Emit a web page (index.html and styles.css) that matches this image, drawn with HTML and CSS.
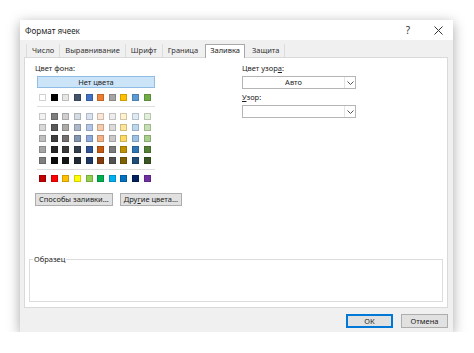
FILE: index.html
```html
<!DOCTYPE html>
<html lang="ru">
<head>
    <meta charset="UTF-8">
    <meta name="viewport" content="width=device-width, initial-scale=1.0">
    <title>Формат ячеек</title>
    <link rel="stylesheet" href="styles.css">
</head>
<body>
    <div class="window">
        <div class="titlebar">
            <span class="title">Формат ячеек</span>
            <span class="title-btn">?</span>
            <span class="title-btn">
                <svg width="9" height="9" viewBox="0 0 9 9"><path d="M0.5 0.5 L8.5 8.5 M8.5 0.5 L0.5 8.5" stroke="#333" stroke-width="1"/></svg>
            </span>
        </div>

        <div class="tabs">
            <span class="tab">Число</span>
            <span class="tab">Выравнивание</span>
            <span class="tab">Шрифт</span>
            <span class="tab">Граница</span>
            <span class="tab active">Заливка</span>
            <span class="tab last">Защита</span>
        </div>

        <div class="panel">
            <div class="columns">
                <div class="col-left">
                    <div class="label">Цвет фона:</div>
                    <button class="no-color">Нет цвета</button>

                    <div class="swatches" id="themeRow"></div>
                    <div class="sep"></div>
                    <div class="swatches" id="tintRows"></div>
                    <div class="sep"></div>
                    <div class="swatches" id="standardRow"></div>

                    <div class="fill-buttons">
                        <button class="btn">Способы заливки...</button>
                        <button class="btn">Дру<u>г</u>ие цвета...</button>
                    </div>
                </div>

                <div class="col-right">
                    <div class="label">Цвет узор<u>а</u>:</div>
                    <div class="select">
                        <span class="select-text">Авто</span>
                        <span class="select-arrow"><svg width="7" height="4" viewBox="0 0 7 4"><path d="M0.5 0.5 L3.5 3.5 L6.5 0.5" fill="none" stroke="#555" stroke-width="1"/></svg></span>
                    </div>
                    <div class="label second"><u>У</u>зор:</div>
                    <div class="select">
                        <span class="select-text"></span>
                        <span class="select-arrow"><svg width="7" height="4" viewBox="0 0 7 4"><path d="M0.5 0.5 L3.5 3.5 L6.5 0.5" fill="none" stroke="#555" stroke-width="1"/></svg></span>
                    </div>
                </div>
            </div>

            <fieldset class="sample">
                <legend>Образец</legend>
            </fieldset>
        </div>

        <div class="actions">
            <button class="btn action default">ОК</button>
            <button class="btn action">Отмена</button>
        </div>
    </div>

    <script>
        const theme = ["#ffffff", "#000000", "#e7e6e6", "#44546a", "#4472c4", "#ed7d31", "#a5a5a5", "#ffc000", "#5b9bd5", "#70ad47"];
        const tints = [
            ["#f2f2f2", "#7f7f7f", "#d0cece", "#d6dce4", "#d9e2f3", "#fbe5d5", "#ededed", "#fff2cc", "#deebf6", "#e2efd9"],
            ["#d8d8d8", "#595959", "#aeaaaa", "#adb9ca", "#b4c6e7", "#f7cbac", "#dbdbdb", "#fee599", "#bdd7ee", "#c5e0b3"],
            ["#bfbfbf", "#3f3f3f", "#757070", "#8496b0", "#8eaadb", "#f4b183", "#c9c9c9", "#ffd965", "#9cc3e5", "#a8d08d"],
            ["#a5a5a5", "#262626", "#3a3838", "#323f4f", "#2f5496", "#c55a11", "#7b7b7b", "#bf9000", "#2e75b5", "#538135"],
            ["#7f7f7f", "#0c0c0c", "#171616", "#222a35", "#1e3864", "#833c0b", "#525252", "#7f6000", "#1e4e79", "#375623"]
        ];
        const standard = ["#c00000", "#ff0000", "#ffc000", "#ffff00", "#92d050", "#00b050", "#00b0f0", "#0070c0", "#002060", "#7030a0"];

        function fill(id, colors) {
            let box = document.getElementById(id);
            colors.forEach(c => {
                let s = document.createElement("span");
                s.className = "swatch";
                s.style.background = c;
                box.appendChild(s);
            });
        }

        fill("themeRow", theme);
        fill("tintRows", tints.flat());
        fill("standardRow", standard);
    </script>
</body>
</html>
```

FILE: styles.css
```css
body {
    margin: 0;
    background: #ffffff;
    font-family: "Noto Sans", "Open Sans", sans-serif;
    font-size: 7.5px;
    color: #1e1e1e;
}
.window {
    margin: 20px 0 0 20px;
    width: 433px;
    height: 312px;
    background: #f0f0f0;
    box-shadow: 0 3px 12px rgba(0, 0, 0, 0.35);
    display: flex;
    flex-direction: column;
}
.titlebar {
    height: 20px;
    background: #ffffff;
    display: flex;
    align-items: center;
    padding-left: 5px;
}
.title {
    flex: 1;
    font-size: 8px;
}
.title-btn {
    width: 30px;
    display: flex;
    justify-content: center;
    align-items: center;
    font-size: 10px;
    color: #333;
}
.tabs {
    display: flex;
    margin: 4px 0 0 6px;
    height: 13px;
    position: relative;
    z-index: 1;
}
.tab {
    padding: 0 5px;
    line-height: 12px;
    border-left: 1px solid #dcdcdc;
    color: #333;
    white-space: nowrap;
}
.tab.last {
    border-right: 1px solid #dcdcdc;
}
.tab.active {
    background: #ffffff;
    border: 1px solid #a8a8a8;
    border-bottom: none;
    height: 13px;
    line-height: 11px;
    margin: 0 2px;
    padding: 0 4px;
    color: #222;
}
.tab.active + .tab {
    border-left: none;
}
.panel {
    margin: 0 5px 0 4px;
    height: 251px;
    box-sizing: border-box;
    background: #ffffff;
    border: 1px solid #d9d9d9;
    display: flex;
    flex-direction: column;
}
.columns {
    display: flex;
    padding-left: 10px;
}
.col-left {
    width: 150px;
}
.col-right {
    margin-left: 57px;
    width: 114px;
}
.label {
    margin-top: 5px;
    line-height: 11px;
}
.label.second {
    margin-top: 3px;
}
.no-color {
    display: block;
    margin: 2px 0 0 2px;
    width: 118px;
    height: 12px;
    padding: 0;
    font: inherit;
    color: #222;
    background: #cce4f7;
    border: 1px solid #8fbde6;
}
.swatches {
    display: grid;
    grid-template-columns: repeat(10, 7px);
    column-gap: 4.65px;
    row-gap: 4px;
    margin-left: 4px;
}
#themeRow {
    margin-top: 6px;
}
#tintRows {
    margin-top: 6px;
}
#standardRow {
    margin-top: 5px;
}
.swatch {
    width: 7px;
    height: 7px;
    box-sizing: border-box;
    border: 1px solid rgba(0, 0, 0, 0.18);
}
.sep {
    margin: 5px 0 0 2px;
    width: 118px;
    height: 1px;
    background: #dedede;
}
.fill-buttons {
    display: flex;
    gap: 7px;
    margin-top: 11px;
}
.btn {
    height: 13px;
    padding: 0 3px;
    font: inherit;
    color: #222;
    background: #e1e1e1;
    border: 1px solid #adadad;
    line-height: 11px;
    white-space: nowrap;
    flex-shrink: 0;
}
.select {
    display: flex;
    height: 13px;
    margin-top: 2px;
    box-sizing: border-box;
    border: 1px solid #b5b5b5;
    background: #ffffff;
}
.select-text {
    flex: 1;
    text-align: center;
    line-height: 11px;
}
.select-arrow {
    width: 10px;
    border-left: 1px solid #e3e3e3;
    display: flex;
    align-items: center;
    justify-content: center;
}
.sample {
    margin: auto 4px 5px 4px;
    height: 47px;
    box-sizing: border-box;
    padding: 0;
    border: 1px solid #dcdcdc;
}
.sample legend {
    margin-left: 3px;
    padding: 0 1px;
    line-height: 8px;
}
.actions {
    display: flex;
    justify-content: flex-end;
    gap: 8px;
    margin-top: 6px;
    padding-right: 5px;
}
.btn.action {
    width: 47px;
    height: 14px;
    padding: 0;
}
.btn.action.default {
    border: 1px solid #0078d7;
    box-shadow: inset 0 0 0 1px #0078d7;
}
```
